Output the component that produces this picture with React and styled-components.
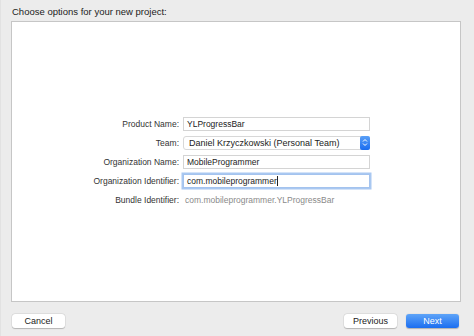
import React from 'react';
import styled, { createGlobalStyle } from 'styled-components';

const GlobalStyle = createGlobalStyle`
  html, body { margin: 0; padding: 0; }
  body {
    font-family: "Liberation Sans", Arial, sans-serif;
    background: #ececec;
  }
`;

const fields = [
  { label: 'Product Name:', value: 'YLProgressBar', kind: 'input' },
  { label: 'Team:', value: 'Daniel Krzyczkowski (Personal Team)', kind: 'select' },
  { label: 'Organization Name:', value: 'MobileProgrammer', kind: 'input' },
  { label: 'Organization Identifier:', value: 'com.mobileprogrammer', kind: 'focus' },
  { label: 'Bundle Identifier:', value: 'com.mobileprogrammer.YLProgressBar', kind: 'text' },
];

const App = () => {
  return (
    <Window>
      <GlobalStyle />
      <Title>Choose options for your new project:</Title>
      <Panel>
        <Form>
          {fields.map(f => (
            <React.Fragment key={f.label}>
              <Label>{f.label}</Label>
              {f.kind === 'input' && <Field>{f.value}</Field>}
              {f.kind === 'focus' && (
                <Field focused>
                  {f.value}
                  <Caret />
                </Field>
              )}
              {f.kind === 'select' && (
                <Select>
                  <span>{f.value}</span>
                  <Stepper>
                    <svg width="6" height="9" viewBox="0 0 6 9">
                      <path d="M1 3.5 L3 1.5 L5 3.5 M1 5.5 L3 7.5 L5 5.5" fill="none" stroke="#fff" strokeWidth="1" />
                    </svg>
                  </Stepper>
                </Select>
              )}
              {f.kind === 'text' && <Plain>{f.value}</Plain>}
            </React.Fragment>
          ))}
        </Form>
      </Panel>
      <Footer>
        <Button>Cancel</Button>
        <Spacer />
        <Button>Previous</Button>
        <Button primary>Next</Button>
      </Footer>
    </Window>
  );
};

export default App;

const Window = styled.div`
  width: 474px;
  height: 336px;
  box-sizing: border-box;
  background: #ececec;
  display: flex;
  flex-direction: column;
  border-left: 1px solid #e2e2e2;
  overflow: hidden;
`;

const Title = styled.div`
  font-size: 9.5px;
  color: #222;
  padding: 6px 0 0 11px;
  height: 15px;
`;

const Panel = styled.div`
  margin: 0 13px 0 10px;
  height: 279px;
  background: #fff;
  border: 1px solid #c6c6c6;
  display: flex;
  align-items: center;
  padding-left: 11px;
`;

const Form = styled.div`
  display: grid;
  grid-template-columns: 156px 187px;
  column-gap: 4px;
  row-gap: 5px;
  align-items: center;
  margin-top: 0;
`;

const Label = styled.div`
  font-size: 8.5px;
  color: #333;
  text-align: right;
  white-space: nowrap;
`;

const Field = styled.div`
  position: relative;
  height: 14px;
  box-sizing: border-box;
  border: 1px solid ${p => (p.focused ? '#a4c3ee' : '#d4d4d4')};
  box-shadow: ${p => (p.focused ? '0 0 0 1.5px #a9c8f1' : 'none')};
  font-size: 8.5px;
  line-height: 12px;
  padding-left: 3px;
  color: #222;
  background: #fff;
  display: flex;
  align-items: center;
`;

const Caret = styled.span`
  display: inline-block;
  width: 1px;
  height: 10px;
  background: #222;
  margin-left: 0.5px;
`;

const Select = styled.div`
  height: 14px;
  box-sizing: border-box;
  border: 1px solid #d8d8d8;
  border-radius: 3px;
  font-size: 9px;
  color: #222;
  display: flex;
  align-items: center;
  justify-content: space-between;
  padding-left: 5px;
  padding-right: 0;
  background: #fff;
`;

const Stepper = styled.div`
  width: 10px;
  height: 14px;
  margin-right: -1px;
  border-radius: 2px;
  background: linear-gradient(#5aa0f7, #1a6cf0);
  display: flex;
  align-items: center;
  justify-content: center;
`;

const Plain = styled.div`
  font-size: 8.5px;
  color: #8a8a8a;
  height: 14px;
  line-height: 14px;
  padding-left: 2px;
`;

const Footer = styled.div`
  display: flex;
  align-items: center;
  gap: 9px;
  padding: 12px 15px 0 11px;
`;

const Spacer = styled.div`
  flex: 1;
`;

const Button = styled.div`
  width: 53px;
  height: 14px;
  box-sizing: border-box;
  border-radius: 3px;
  font-size: 9px;
  display: flex;
  align-items: center;
  justify-content: center;
  color: ${p => (p.primary ? '#fff' : '#222')};
  background: ${p => (p.primary ? 'linear-gradient(#5ea4f8, #1b6ef0)' : '#fff')};
  box-shadow: ${p => (p.primary ? '0 0.5px 1px rgba(0,0,0,0.25)' : '0 0.5px 1px rgba(0,0,0,0.2), 0 0 0 0.5px rgba(0,0,0,0.08)')};
`;
